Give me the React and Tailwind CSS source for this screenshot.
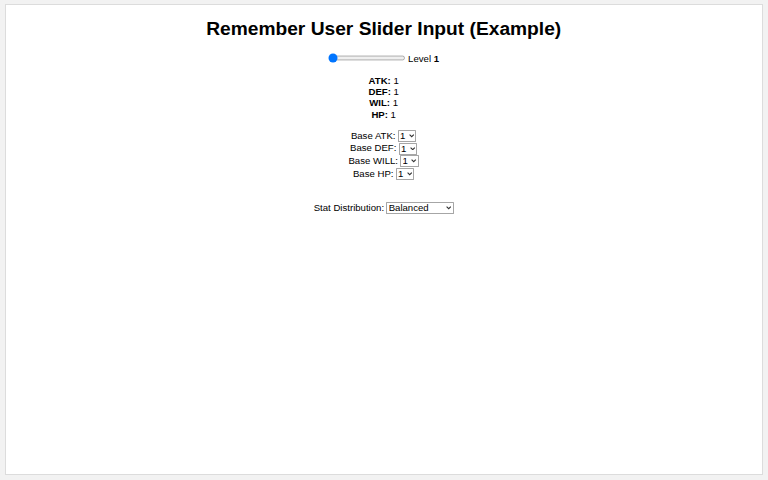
import { useState } from 'react';

function Select({ value, onChange, options, className }) {
  return (
    <span className={`relative inline-flex ml-[4px] ${className}`}>
      <select
        value={value}
        onChange={(e) => onChange(e.target.value)}
        className="appearance-none w-full h-[20px] text-[16px] leading-[18px] border border-[#a6a6a6] rounded-[1px] bg-white pl-[2px] pr-[14px] py-0"
      >
        {options.map((o) => (
          <option key={o} value={o}>{o}</option>
        ))}
      </select>
      <svg
        className="absolute right-[4px] top-[7px] pointer-events-none"
        width="9"
        height="6"
        viewBox="0 0 9 6"
        fill="none"
        stroke="#333"
        strokeWidth="1.8"
      >
        <path d="M1 1l3.5 3.5L8 1" />
      </svg>
    </span>
  );
}

function BaseSelect({ label, value, onChange }) {
  return (
    <div className="flex justify-center items-center h-[21px]">
      <span>{label}:</span>
      <Select value={value} onChange={onChange} options={[1, 2, 3, 4, 5]} className="w-[31px]" />
    </div>
  );
}

export default function App() {
  const [level, setLevel] = useState(1);
  const [base, setBase] = useState({ atk: 1, def: 1, will: 1, hp: 1 });
  const [dist, setDist] = useState('Balanced');

  const set = (k) => (v) => setBase({ ...base, [k]: v });

  return (
    <div className="w-[768px] h-[480px] bg-[#f2f2f2] overflow-hidden">
      {/* page is drawn at 60% zoom, sizes below are unzoomed */}
      <div className="[zoom:0.6] w-[1280px] h-[800px] pt-[7px] pl-[8px] font-['Liberation_Sans',Arial,sans-serif] text-[16px] text-black">
        <div className="w-[1263px] h-[785px] bg-white border border-[#dcdcdc] flex flex-col items-center">
          <h1 className="mt-[21px] text-[32px] font-bold leading-[37px]">Remember User Slider Input (Example)</h1>

          <div className="flex items-center h-[20px] mt-[20px]">
            <input
              type="range"
              min="1"
              max="100"
              value={level}
              onChange={(e) => setLevel(Number(e.target.value))}
              className="w-[129px] accent-[#0075ff]"
            />
            <span className="ml-[4px] mt-[3px]">Level <b>{level}</b></span>
          </div>

          <div className="mt-[19px] leading-[18.4px] text-center">
            <div><b>ATK:</b> {base.atk}</div>
            <div><b>DEF:</b> {base.def}</div>
            <div><b>WIL:</b> {base.will}</div>
            <div><b>HP:</b> {base.hp}</div>
          </div>

          <div className="mt-[17px]">
            <BaseSelect label="Base ATK" value={base.atk} onChange={set('atk')} />
            <BaseSelect label="Base DEF" value={base.def} onChange={set('def')} />
            <BaseSelect label="Base WILL" value={base.will} onChange={set('will')} />
            <BaseSelect label="Base HP" value={base.hp} onChange={set('hp')} />
          </div>

          <div className="mt-[36px] flex items-center h-[21px]">
            <span>Stat Distribution:</span>
            <Select
              value={dist}
              onChange={setDist}
              options={['Balanced', 'Offensive', 'Defensive']}
              className="w-[112px]"
            />
          </div>
        </div>
      </div>
    </div>
  );
}
